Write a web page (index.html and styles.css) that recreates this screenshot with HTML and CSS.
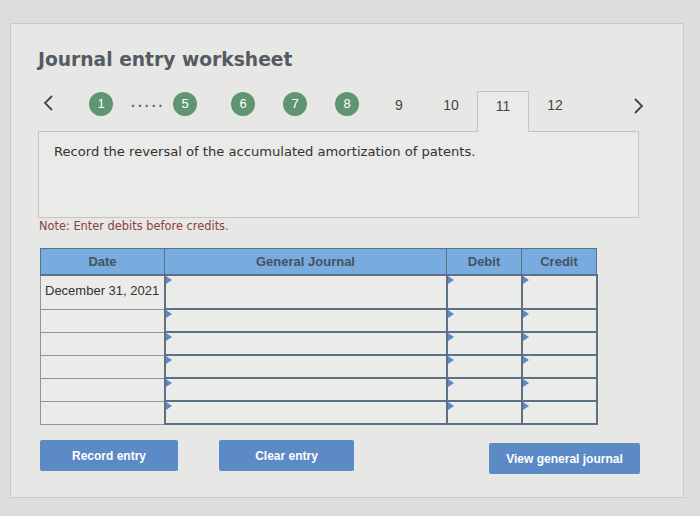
FILE: index.html
```html
<!DOCTYPE html>
<html>
<head>
<meta charset="utf-8">
<link rel="stylesheet" href="styles.css">
</head>
<body>
<div class="card">
  <h1 class="title">Journal entry worksheet</h1>
  <div class="nav">
    <div class="nav-arrow nav-prev"><svg width="12" height="18" viewBox="0 0 12 18"><path d="M10 2 L3 9 L10 16" fill="none" stroke="#444" stroke-width="1.8"/></svg></div>
    <div class="step"><span class="dot">1</span></div>
    <div class="dots">.....</div>
    <div class="step step-5"><span class="dot">5</span></div>
    <div class="step"><span class="dot">6</span></div>
    <div class="step"><span class="dot">7</span></div>
    <div class="step"><span class="dot">8</span></div>
    <div class="step">9</div>
    <div class="step">10</div>
    <div class="step tab">11</div>
    <div class="step">12</div>
    <div class="spacer"></div>
    <div class="nav-arrow nav-next"><svg width="12" height="18" viewBox="0 0 12 18"><path d="M2 2 L9 9 L2 16" fill="none" stroke="#444" stroke-width="1.8"/></svg></div>
  </div>
  <div class="prompt">Record the reversal of the accumulated amortization of patents.</div>
  <div class="note">Note: Enter debits before credits.</div>
  <table class="journal">
    <thead>
      <tr><th class="c-date">Date</th><th class="c-gj">General Journal</th><th class="c-dr">Debit</th><th class="c-cr">Credit</th></tr>
    </thead>
    <tbody>
      <tr class="first"><td class="date">December 31, 2021</td><td class="inp"></td><td class="inp"></td><td class="inp"></td></tr>
      <tr><td class="date"></td><td class="inp"></td><td class="inp"></td><td class="inp"></td></tr>
      <tr><td class="date"></td><td class="inp"></td><td class="inp"></td><td class="inp"></td></tr>
      <tr><td class="date"></td><td class="inp"></td><td class="inp"></td><td class="inp"></td></tr>
      <tr><td class="date"></td><td class="inp"></td><td class="inp"></td><td class="inp"></td></tr>
      <tr><td class="date"></td><td class="inp"></td><td class="inp"></td><td class="inp"></td></tr>
    </tbody>
  </table>
  <div class="buttons">
    <button class="btn btn-record">Record entry</button>
    <button class="btn btn-clear">Clear entry</button>
    <div class="spacer"></div>
    <button class="btn btn-view">View general journal</button>
  </div>
</div>
</body>
</html>
```
FILE: styles.css
```css
html, body {
  margin: 0;
  padding: 0;
}
body {
  background: #dedddb;
  width: 700px;
  height: 516px;
  overflow: hidden;
  font-family: "Liberation Sans", Arial, sans-serif;
}
.card {
  box-sizing: border-box;
  margin: 23px 0 0 10px;
  width: 674px;
  height: 475px;
  background: #e7e7e5;
  border: 1px solid #c9c9c7;
  padding: 0 28px 0 27px;
  display: flex;
  flex-direction: column;
}
.title {
  margin: 24px 0 0 0;
  font-family: "DejaVu Sans", Verdana, sans-serif;
  font-weight: bold;
  font-size: 18.7px;
  line-height: 24px;
  color: #545b62;
}
.nav {
  margin-top: 19px;
  height: 40px;
  display: flex;
  align-items: stretch;
  font-size: 14px;
  color: #444;
}
.nav-arrow {
  width: 20px;
  display: flex;
  justify-content: center;
  padding-top: 3px;
  align-items: flex-start;
}
.nav-prev {
  margin-right: 17px;
}
.nav-next {
  margin-right: 6px;
  padding-top: 6px;
}
.step {
  width: 52px;
  display: flex;
  justify-content: center;
  align-items: flex-start;
  padding-top: 3px;
  line-height: 22px;
  box-sizing: border-box;
}
.step-5 {
  width: 50px;
  justify-content: flex-start;
  padding-left: 6px;
}
.dot {
  width: 24px;
  height: 24px;
  border-radius: 50%;
  background: #5f9570;
  color: #fff;
  font-size: 13px;
  line-height: 24px;
  text-align: center;
  margin-top: -2px;
}
.dots {
  width: 40px;
  box-sizing: border-box;
  padding: 0 0 0 4px;
  line-height: 22px;
  font-size: 14px;
  letter-spacing: 3px;
  color: #666;
  font-weight: bold;
}
.tab {
  border: 1px solid #c4c4c2;
  border-bottom: none;
  background: #eaeae8;
  margin-bottom: -1px;
  position: relative;
  z-index: 1;
}
.spacer {
  flex: 1;
}
.prompt {
  box-sizing: border-box;
  width: 601px;
  height: 87px;
  border: 1px solid #c4c4c2;
  background: #eaeae8;
  padding: 11px 0 0 15px;
  font-family: "DejaVu Sans", Verdana, sans-serif;
  font-size: 13.1px;
  line-height: 18px;
  color: #333;
}
.note {
  margin-top: 0;
  margin-left: 1px;
  font-family: "DejaVu Sans", Verdana, sans-serif;
  font-size: 11.4px;
  line-height: 16px;
  color: #8a4040;
}
.journal {
  margin-top: 14px;
  margin-left: 2px;
  border-collapse: collapse;
  table-layout: fixed;
  width: 552px;
}
.journal th {
  background: #78abe0;
  color: #46525e;
  font-size: 13px;
  font-weight: bold;
  height: 25px;
  padding: 0;
  border: 1px solid #5d7084;
  border-bottom: 2px solid #5d7084;
}
.c-date { width: 123px; }
.c-gj { width: 281px; }
.c-dr { width: 74px; }
.c-cr { width: 74px; }
.journal td {
  padding: 0;
  height: 21px;
  background: #ebebe9;
}
.journal tr.first td {
  height: 32px;
}
.journal td.date {
  border: 1px solid #8995a1;
  font-size: 13px;
  color: #333;
  padding-left: 4px;
  vertical-align: top;
  line-height: 16px;
}
.journal tr.first td.date {
  padding-top: 7px;
  height: 25px;
}
.journal td.inp {
  border: 2px solid #5d7084;
  position: relative;
}
.journal td.inp::before {
  content: "";
  position: absolute;
  left: 0;
  top: 0;
  border-style: solid;
  border-width: 4px 0 4px 6px;
  border-color: transparent transparent transparent #5b8ac6;
}
.buttons {
  margin-top: 15px;
  margin-left: 2px;
  width: 600px;
  display: flex;
  align-items: flex-start;
}
.btn {
  height: 31px;
  background: #5b8ac6;
  border: none;
  border-radius: 2px;
  color: #fff;
  font-family: "Liberation Sans", Arial, sans-serif;
  font-weight: bold;
  font-size: 12px;
  padding: 0;
}
.btn-record { width: 138px; }
.btn-clear { width: 135px; margin-left: 41px; }
.btn-view { width: 151px; margin-top: 3px; }
```
